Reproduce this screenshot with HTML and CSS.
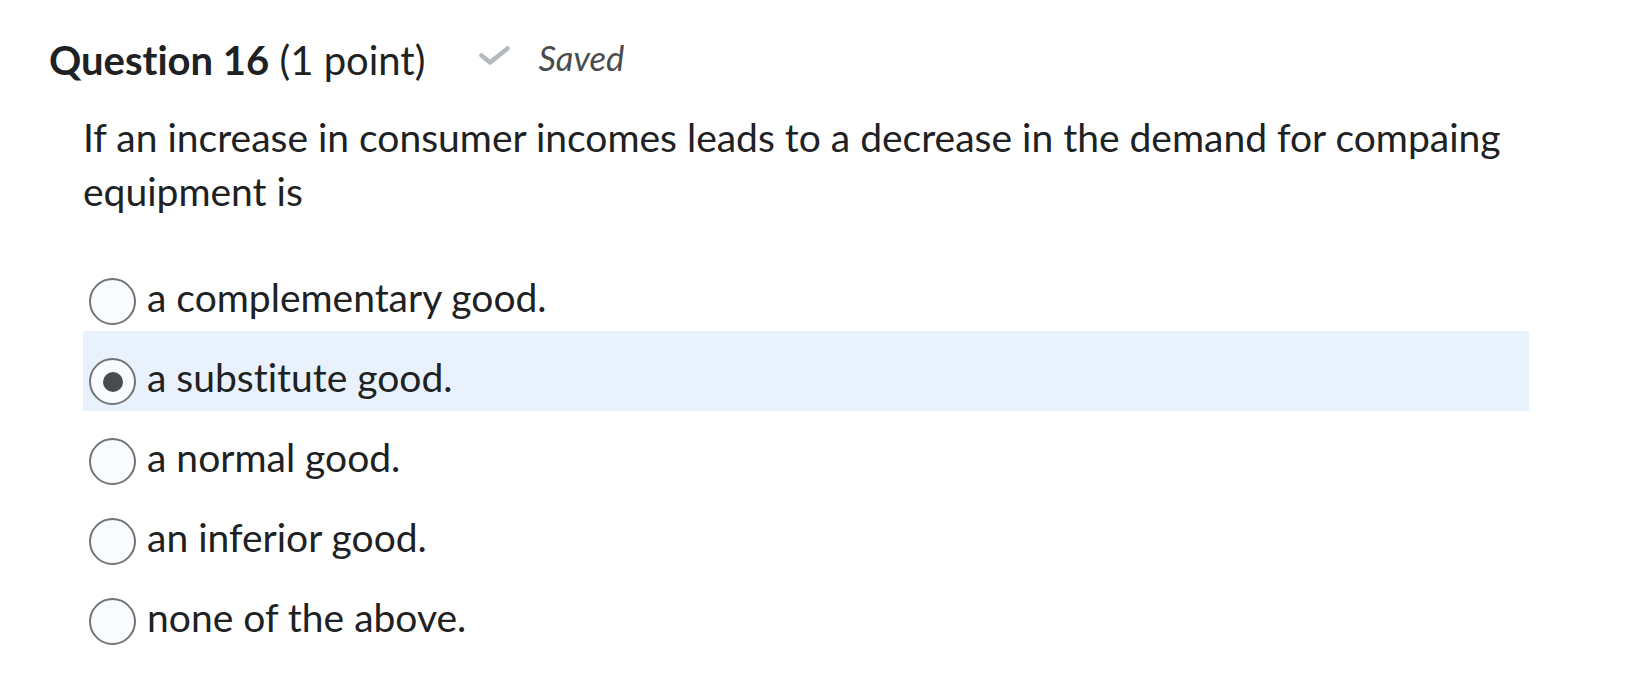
FILE: index.html
```html
<!DOCTYPE html>
<html lang="en">
<head>
<meta charset="utf-8">
<title>Question 16</title>
<link rel="stylesheet" href="styles.css">
</head>
<body>
<div class="page">
  <div class="q-header">
    <h2 class="q-title"><strong>Question 16</strong> (1 point)</h2>
    <svg class="check" width="31" height="19" viewBox="0 0 31 19" aria-hidden="true">
      <polyline points="2.5,9.5 11,16.5 28.5,2.5" fill="none" stroke="#b3babf" stroke-width="4.5" stroke-linecap="round" stroke-linejoin="round"/>
    </svg>
    <span class="saved">Saved</span>
  </div>
  <div class="q-body">
    <p class="q-text">If an increase in consumer incomes leads to a decrease in the demand for compaing equipment is</p>
    <div class="options">
      <label class="option"><span class="radio"></span><span class="opt-text">a complementary good.</span></label>
      <label class="option selected"><span class="radio checked"></span><span class="opt-text">a substitute good.</span></label>
      <label class="option"><span class="radio"></span><span class="opt-text">a normal good.</span></label>
      <label class="option"><span class="radio"></span><span class="opt-text">an inferior good.</span></label>
      <label class="option"><span class="radio"></span><span class="opt-text">none of the above.</span></label>
    </div>
  </div>
</div>
</body>
</html>
```

FILE: styles.css
```css
* { box-sizing: border-box; }

html, body {
  margin: 0;
  padding: 0;
  background: #ffffff;
}

body {
  font-family: Lato, "Noto Sans", sans-serif;
  color: #202122;
  font-variant-ligatures: none;
}

.page {
  padding: 37px 106px 0 49px;
}

.q-header {
  display: flex;
  align-items: flex-start;
  height: 47px;
}

.q-title {
  margin: 0;
  font-size: 40px;
  line-height: 47px;
  font-weight: 400;
  white-space: nowrap;
}

.q-title strong {
  font-weight: 700;
}

.check {
  margin: 9px 0 0 54px;
  display: block;
}

.saved {
  margin: 1px 0 0 28px;
  font-size: 34.5px;
  line-height: 40px;
  font-style: italic;
  color: #494c4e;
}

.q-body {
  padding-left: 34px;
}

.q-text {
  margin: 26px 0 0 0;
  font-size: 39px;
  line-height: 54px;
}

.options {
  margin-top: 33px;
  display: flex;
  flex-direction: column;
}

.option {
  display: flex;
  align-items: flex-start;
  height: 80px;
  padding: 23px 0 10px 6px;
}

.option.selected {
  background: #e8f1fc;
}

.radio {
  flex: none;
  width: 47px;
  height: 47px;
  margin-top: 4px;
  border-radius: 50%;
  border: 2px solid #707578;
  background: #f9fbff;
  display: flex;
  align-items: center;
  justify-content: center;
}

.radio.checked::after {
  content: "";
  width: 20px;
  height: 20px;
  border-radius: 50%;
  background: #494c4e;
}

.opt-text {
  margin-left: 11px;
  font-size: 39px;
  line-height: 47px;
  white-space: nowrap;
}
```
